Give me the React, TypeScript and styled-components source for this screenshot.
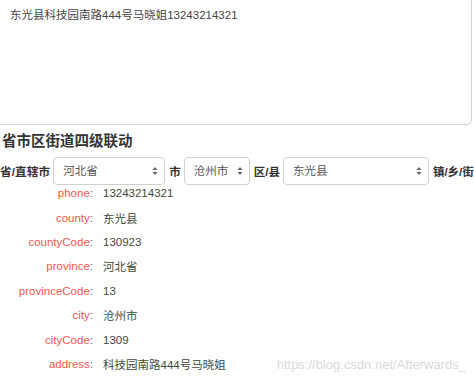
import React from "react"
import styled, { createGlobalStyle } from "styled-components"

const GlobalStyle = createGlobalStyle`
  html, body {
    margin: 0;
    padding: 0;
    background: #fff;
    overflow: hidden;
  }
  body {
    font-family: "Liberation Sans", "Noto Sans CJK SC", sans-serif;
  }
`

const Page = styled.div`
  position: relative;
  width: 474px;
  height: 380px;
  overflow: hidden;
  font-family: "Liberation Sans", "Noto Sans CJK SC", sans-serif;
`

const AddressBox = styled.textarea`
  display: block;
  box-sizing: border-box;
  width: 476px;
  height: 130px;
  margin: -5px 0 0 -4px;
  padding: 11px 13px;
  border: 1px solid #d2d2d2;
  border-radius: 5px;
  resize: none;
  font-family: "Liberation Sans", "Noto Sans CJK SC", sans-serif;
  font-size: 11.5px;
  line-height: 16px;
  color: #444;
  outline: none;
`

const Title = styled.h3`
  margin: 5px 0 0 2px;
  font-size: 14.5px;
  line-height: 22px;
  font-weight: 600;
  color: #333;
`

const PickerRow = styled.div`
  display: flex;
  align-items: center;
  height: 28px;
  margin-top: 5px;
  white-space: nowrap;
`

const PickerLabel = styled.span`
  font-size: 11.5px;
  font-weight: 700;
  color: #333;
  margin: 0 3px 0 4px;
  &:first-child {
    margin-left: 0;
    letter-spacing: 0.2px;
  }
`

const SelectWrap = styled.div<{ $w: number }>`
  position: relative;
  flex: none;
  width: ${(p) => p.$w}px;
  height: 28px;
`

const Select = styled.select`
  appearance: none;
  -webkit-appearance: none;
  box-sizing: border-box;
  width: 100%;
  height: 100%;
  padding: 0 18px 0 9px;
  border: 1px solid #d0d0d0;
  border-radius: 4px;
  background: #fff;
  font-family: "Liberation Sans", "Noto Sans CJK SC", sans-serif;
  font-size: 11.5px;
  color: #555;
  outline: none;
`

const Arrows = styled.svg`
  position: absolute;
  right: 7px;
  top: 9px;
  pointer-events: none;
`

const InfoList = styled.dl`
  display: grid;
  grid-template-columns: 93px 1fr;
  grid-auto-rows: 24.4px;
  align-items: center;
  margin: -4px 0 0 0;
  font-size: 11.5px;
`

const Key = styled.dt`
  text-align: right;
  color: #ef5650;
  &::after {
    content: ":";
    color: #666;
  }
`

const Value = styled.dd`
  margin: 0 0 0 10px;
  color: #3d4a3a;
`

const Watermark = styled.div`
  position: absolute;
  right: 8px;
  bottom: 8px;
  font-size: 13px;
  color: rgba(190, 190, 190, 0.6);
  pointer-events: none;
`

const SelectBox = ({ value, width }: { value: string; width: number }) => (
  <SelectWrap $w={width}>
    <Select value={value} onChange={() => {}}>
      <option>{value}</option>
    </Select>
    <Arrows width="6" height="10" viewBox="0 0 6 10">
      <path d="M0.5 4 L3 1 L5.5 4 Z M0.5 6 L3 9 L5.5 6 Z" fill="#666" />
    </Arrows>
  </SelectWrap>
)

const rows: [string, string][] = [
  ["phone", "13243214321"],
  ["county", "东光县"],
  ["countyCode", "130923"],
  ["province", "河北省"],
  ["provinceCode", "13"],
  ["city", "沧州市"],
  ["cityCode", "1309"],
  ["address", "科技园南路444号马晓姐"],
]

export default function App() {
  return (
    <Page>
      <GlobalStyle />
      <AddressBox defaultValue="东光县科技园南路444号马晓姐13243214321" />
      <Title>省市区街道四级联动</Title>
      <PickerRow>
        <PickerLabel>省/直辖市</PickerLabel>
        <SelectBox value="河北省" width={112} />
        <PickerLabel>市</PickerLabel>
        <SelectBox value="沧州市" width={66} />
        <PickerLabel>区/县</PickerLabel>
        <SelectBox value="东光县" width={146} />
        <PickerLabel>镇/乡/街道</PickerLabel>
      </PickerRow>
      <InfoList>
        {rows.map(([k, v]) => (
          <React.Fragment key={k}>
            <Key>{k}</Key>
            <Value>{v}</Value>
          </React.Fragment>
        ))}
      </InfoList>
      <Watermark>https://blog.csdn.net/Afterwards_</Watermark>
    </Page>
  )
}
